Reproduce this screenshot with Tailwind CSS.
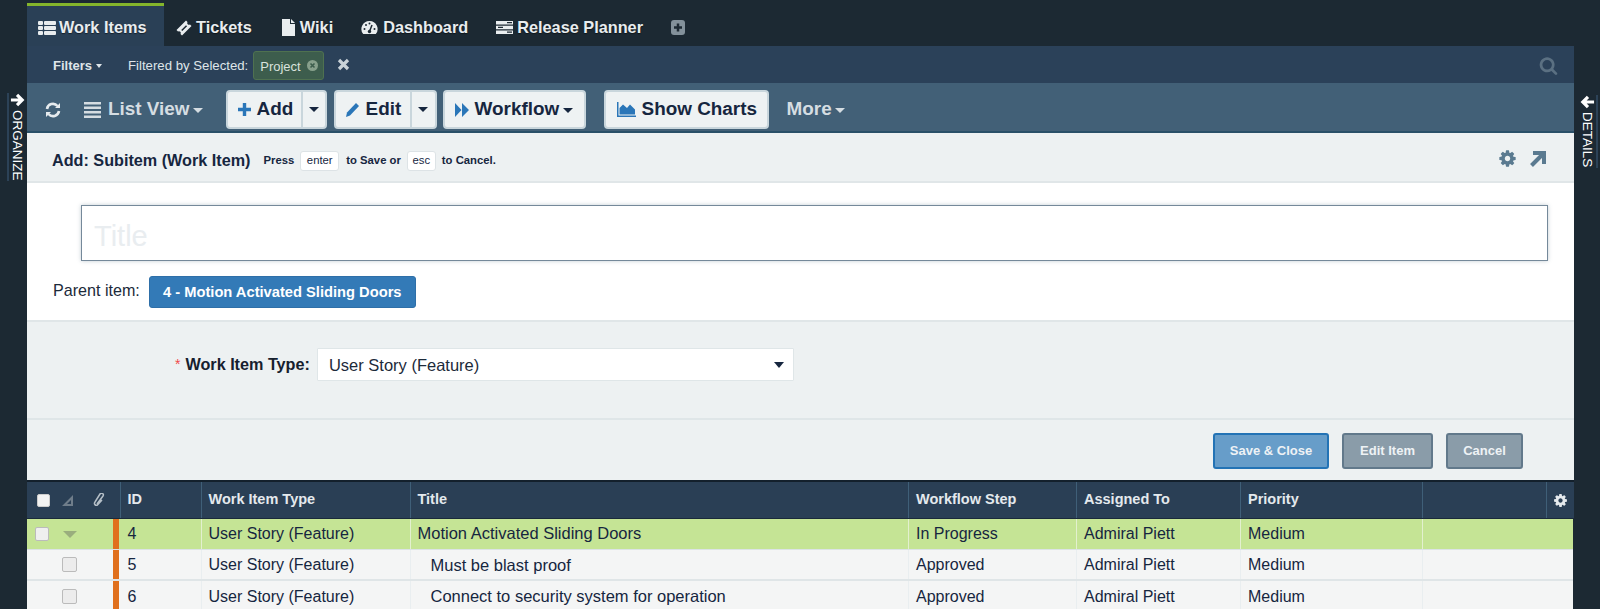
<!DOCTYPE html>
<html>
<head>
<meta charset="utf-8">
<script src="https://cdn.jsdelivr.net/npm/@tailwindcss/browser@4"></script>
</head>
<body class="m-0 overflow-hidden bg-[#1c2933] font-['Liberation_Sans',Arial,sans-serif] text-[#16263f]">
<div class="flex h-[609px] w-[1600px] overflow-hidden">
  <!-- left rail -->
  <div class="w-[27px] shrink-0 pt-[93px] pl-[7px]">
    <div class="flex w-[18px] flex-col items-center border-l-2 border-[#2c4257] pb-0 text-white">
      <svg class="mb-[3px] h-[14px] w-[15px]" viewBox="0 0 16 14"><path d="M1 7h11M7.500 1.500L13 7l-5.500 5.500" fill="none" stroke="#fff" stroke-width="3.400"/></svg>
      <span class="text-[13.500px] leading-[15px] [writing-mode:vertical-rl]">ORGANIZE</span>
    </div>
  </div>

  <!-- main -->
  <div class="flex w-[1547px] shrink-0 flex-col overflow-hidden">
    <!-- tabs -->
    <div class="flex h-[46px] shrink-0 items-end pt-[3px] text-[16.300px] font-bold text-[#e9edef] [text-shadow:0_1px_1px_rgba(0,0,0,0.5)]">
      <div class="flex h-[43px] w-[137px] items-center gap-[3px] border-t-[3px] border-[#84b52c] bg-[#2a4056] pl-[11px] pt-[3px]">
        <svg class="h-[14px] w-[18px]" viewBox="0 0 18 14" fill="#e9edef"><rect width="5" height="4" rx="1"/><rect x="6" width="12" height="4" rx="1"/><rect y="5" width="5" height="4" rx="1"/><rect x="6" y="5" width="12" height="4" rx="1"/><rect y="10" width="5" height="4" rx="1"/><rect x="6" y="10" width="12" height="4" rx="1"/></svg>
        <span>Work Items</span>
      </div>
      <div class="flex h-[43px] items-center gap-[4px] pl-[12px] pt-[6px]">
        <svg class="h-[16px] w-[16px]" viewBox="0 0 16 16" fill="#e9edef"><path d="M10 .5l1.500 1.500a1.800 1.800 0 0 0 2.500 2.500l1.500 1.500-9.500 9.500L4.500 14a1.800 1.800 0 0 0-2.500-2.500L.5 10zM10 5.200L5.200 10l1.100 1.100L11.100 6.300z" fill-rule="evenodd"/></svg>
        <span>Tickets</span>
      </div>
      <div class="flex h-[43px] items-center gap-[5px] pl-[30px] pt-[6px]">
        <svg class="h-[17px] w-[13px]" viewBox="0 0 13 17" fill="#e9edef"><path d="M0 0h8v5h5v12H0zM9 0l4 4H9z"/></svg>
        <span>Wiki</span>
      </div>
      <div class="flex h-[43px] items-center gap-[5px] pl-[28px] pt-[6px]">
        <svg class="h-[15px] w-[17px]" viewBox="0 0 17 15"><path d="M8.500 1A8 8 0 0 0 2.200 14h12.600A8 8 0 0 0 8.500 1z" fill="#e9edef"/><path d="M8.500 11.500L11 5" stroke="#1c2933" stroke-width="1.500"/><circle cx="8.500" cy="11.500" r="1.700" fill="#1c2933"/><circle cx="3.500" cy="9" r="1" fill="#1c2933"/><circle cx="5" cy="5" r="1" fill="#1c2933"/><circle cx="8.500" cy="3.500" r="1" fill="#1c2933"/><circle cx="13.500" cy="9" r="1" fill="#1c2933"/></svg>
        <span>Dashboard</span>
      </div>
      <div class="flex h-[43px] items-center gap-[4px] pl-[28px] pt-[6px]">
        <svg class="h-[13px] w-[17px]" viewBox="0 0 17 13" fill="#e9edef"><path d="M0 0h17v3.500H0zM0 4.700h17v3.500H0zM0 9.500h17V13H0z"/><path d="M11 1h5v1.300h-5zM2 5.800h5v1.300H2zM11 10.500h5v1.300h-5z" fill="#1c2933"/></svg>
        <span>Release Planner</span>
      </div>
      <div class="flex h-[43px] items-center pl-[28px] pt-[5px]">
        <svg class="h-[15px] w-[14px]" viewBox="0 0 14 15"><rect width="14" height="15" rx="3" fill="#83919b"/><path d="M7 3.500v8M3 7.500h8" stroke="#1c2933" stroke-width="2.500"/></svg>
      </div>
    </div>

    <!-- filter bar -->
    <div class="flex h-[37px] shrink-0 items-center bg-[#2b4159] pl-[26px] pr-[16px] pt-[1px] text-[13.200px] text-[#dfe5e9]">
      <span class="pt-[2px] text-[13px] font-bold">Filters</span>
      <span class="ml-[4px] mt-[2px] border-x-[3.500px] border-t-[4px] border-x-transparent border-t-[#dfe5e9]"></span>
      <span class="ml-[26px] pt-[2px]">Filtered by Selected:</span>
      <span class="ml-[5px] flex h-[29px] w-[71px] items-center rounded-[3px] border border-[#4f7150] bg-[#3d5d4d] pl-[6px] pt-[3px] text-[13px] text-[#d9e2dc]">Project
        <svg class="ml-[6px] mb-[2px] h-[11px] w-[11px]" viewBox="0 0 11 11"><circle cx="5.500" cy="5.500" r="5.500" fill="#87a08c"/><path d="M3.500 3.500l4 4m0-4l-4 4" stroke="#3d5d4d" stroke-width="1.600"/></svg>
      </span>
      <svg class="ml-[13px] mb-[2px] h-[13px] w-[13px]" viewBox="0 0 13 13"><path d="M2 2l9 9m0-9l-9 9" stroke="#c9d2d8" stroke-width="3.200"/></svg>
      <svg class="ml-auto h-[19px] w-[19px]" viewBox="0 0 1792 1792" fill="#5b7082"><path d="M1216 832q0-185-131.500-316.500t-316.500-131.500-316.500 131.500-131.500 316.500 131.500 316.500 316.500 131.500 316.500-131.500 131.500-316.500zm512 832q0 52-38 90t-90 38q-54 0-90-38l-343-342q-179 124-399 124-143 0-273.500-55.500t-225-150-150-225-55.500-273.500 55.500-273.500 150-225 225-150 273.500-55.500 273.500 55.500 225 150 150 225 55.500 273.500q0 220-124 399l343 343q37 37 37 90z"/></svg>
    </div>

    <!-- toolbar -->
    <div class="flex h-[50px] shrink-0 items-center border-b-2 border-[#2a5068] bg-[#426077] pl-[18px] pt-[5px] text-[18.900px] font-bold">
      <svg class="h-[16px] w-[16px]" viewBox="0 0 16 16" fill="none" stroke="#e6ebee" stroke-width="2.600"><path d="M2 7a6 6 0 0 1 10.500-3M14 9a6 6 0 0 1-10.500 3"/><path d="M15 1v5h-5zM1 15v-5h5z" fill="#e6ebee" stroke="none"/></svg>
      <svg class="ml-[23px] h-[16px] w-[17px]" viewBox="0 0 17 16" fill="#d5dde2"><path d="M0 0h17v2.500H0zM0 4.500h17V7H0zM0 9h17v2.500H0zM0 13.500h17V16H0z"/></svg>
      <span class="ml-[7px] text-[#d5dde2]">List View</span>
      <span class="ml-[3px] mt-[2px] border-x-[5px] border-t-[5px] border-x-transparent border-t-[#d5dde2]"></span>

      <div class="ml-[23px] flex h-[39px] w-[101px] shrink-0 rounded-[4px] border-2 border-[#c9d6dc] bg-[#eef2f3]">
        <div class="flex w-[75px] items-center gap-[6px] border-r-2 border-[#c9d6dc] pl-[10px]">
          <svg class="h-[13px] w-[13px]" viewBox="0 0 13 13"><path d="M6.500 0v13M0 6.500h13" stroke="#2a76b8" stroke-width="3.400"/></svg>
          <span>Add</span>
        </div>
        <div class="flex flex-1 items-center justify-center"><span class="border-x-[5px] border-t-[5px] border-x-transparent border-t-[#16263f]"></span></div>
      </div>

      <div class="ml-[7px] flex h-[39px] w-[103px] shrink-0 rounded-[4px] border-2 border-[#c9d6dc] bg-[#eef2f3]">
        <div class="flex w-[76px] items-center gap-[6px] border-r-2 border-[#c9d6dc] pl-[10px]">
          <svg class="h-[15px] w-[14px]" viewBox="0 0 14 15" fill="#2a76b8"><path d="M10 1l3 3-9 9.500-4 1.500 1-4.500z"/></svg>
          <span>Edit</span>
        </div>
        <div class="flex flex-1 items-center justify-center"><span class="border-x-[5px] border-t-[5px] border-x-transparent border-t-[#16263f]"></span></div>
      </div>

      <div class="ml-[6px] flex h-[39px] w-[143px] shrink-0 items-center rounded-[4px] border-2 border-[#c9d6dc] bg-[#eef2f3] pl-[10px]">
        <svg class="h-[14px] w-[14px]" viewBox="0 0 14 14" fill="#2a76b8"><path d="M0 0l6.500 7L0 14zM7 0l7 7-7 7z"/></svg>
        <span class="ml-[6px]">Workflow</span>
        <span class="ml-[4px] mt-[2px] border-x-[5px] border-t-[5px] border-x-transparent border-t-[#16263f]"></span>
      </div>

      <div class="ml-[18px] flex h-[39px] w-[165px] shrink-0 items-center rounded-[4px] border-2 border-[#c9d6dc] bg-[#eef2f3] pl-[11px]">
        <svg class="h-[15px] w-[19px]" viewBox="0 0 19 15" fill="#2a76b8"><path d="M0 0h1.500v13.500H19V15H0z"/><path d="M2.500 12.500V6L6 2.500 10 6l3-3.500 5 5v5z"/></svg>
        <span class="ml-[6px]">Show Charts</span>
      </div>

      <span class="ml-[18px] text-[#d5dde2]">More</span>
      <span class="ml-[3px] mt-[2px] border-x-[5px] border-t-[5px] border-x-transparent border-t-[#d5dde2]"></span>
    </div>

    <!-- add header -->
    <div class="flex h-[50px] shrink-0 items-center border-b-2 border-[#e0e6e8] bg-[#edf1f2] pl-[25px] pr-[28px] pt-[7px]">
      <span class="text-[16.200px] font-bold">Add: Subitem (Work Item)</span>
      <span class="ml-[13px] text-[11.300px] font-bold">Press</span>
      <span class="ml-[6px] flex h-[20px] w-[39px] items-center justify-center rounded-[3px] border border-[#dde3e6] bg-white text-[11.300px]">enter</span>
      <span class="ml-[7px] text-[11.300px] font-bold">to Save or</span>
      <span class="ml-[6px] flex h-[20px] w-[29px] items-center justify-center rounded-[3px] border border-[#dde3e6] bg-white text-[11.300px]">esc</span>
      <span class="ml-[6px] text-[11.300px] font-bold">to Cancel.</span>
      <svg class="ml-auto mb-[4px] h-[19px] w-[19px]" viewBox="0 0 1792 1792" fill="#5a7a90"><path d="M1152 896q0-106-75-181t-181-75-181 75-75 181 75 181 181 75 181-75 75-181zm512-109v222q0 12-8 23t-20 13l-185 28q-19 54-39 91 35 50 107 138 10 12 10 25t-9 23q-27 37-99 108t-94 71q-12 0-26-9l-138-108q-44 23-91 38-16 136-29 186-7 28-36 28h-222q-14 0-24.500-8.500t-11.500-21.500l-28-184q-49-16-90-37l-141 107q-10 9-25 9-14 0-25-11-126-114-165-168-7-10-7-23 0-12 8-23 15-21 51-66.500t54-70.500q-27-50-41-99l-183-27q-13-2-21-12.500t-8-23.500v-222q0-12 8-23t19-13l186-28q14-46 39-92-40-57-107-138-10-12-10-24 0-10 9-23 26-36 98.500-107.500t94.500-71.500q13 0 26 10l138 107q44-23 91-38 16-136 29-186 7-28 36-28h222q14 0 24.500 8.500t11.500 21.500l28 184q49 16 90 37l142-107q9-9 24-9 13 0 25 10 129 119 165 170 7 8 7 22 0 12-8 23-15 21-51 66.500t-54 70.500q26 50 41 98l183 28q13 2 21 12.500t8 23.500z"/></svg>
      <svg class="ml-[13px] mb-[4px] h-[16px] w-[16px]" viewBox="0 0 16 16"><path d="M1.500 14.500L13 3" stroke="#5a7a90" stroke-width="4"/><path d="M3 0h13v13h-4V4H3z" fill="#5a7a90"/></svg>
    </div>

    <!-- title block -->
    <div class="flex h-[139px] shrink-0 flex-col border-b-2 border-[#e0e6e8] bg-white pl-[26px]">
      <div class="ml-[28px] mt-[22px] flex h-[56px] w-[1467px] shrink-0 items-center border border-[#75899a] pl-[12px] pt-[7px] text-[29px] text-[#e9edf0] shadow-[0_0_4px_rgba(80,110,130,0.35)]">Title</div>
      <div class="mt-[15px] flex items-center text-[16.100px] text-[#1c2a3a]">
        <span class="pb-[3px]">Parent item:</span>
        <span class="ml-[9px] flex h-[32px] w-[267px] items-center justify-center rounded-[3px] border border-[#2e6fa8] bg-[#337ab7] text-[14.700px] font-bold text-white">4 - Motion Activated Sliding Doors</span>
      </div>
    </div>

    <!-- type row -->
    <div class="flex h-[98px] shrink-0 items-start border-b-2 border-[#dfe6e8] bg-[#edf1f2] pl-[148px] pt-[26px]">
      <div class="flex h-[33px] items-center">
        <span class="mr-[5px] text-[14px] text-[#f04a4a]">*</span>
        <span class="text-[16.200px] font-bold text-[#16202e]">Work Item Type:</span>
        <div class="ml-[7px] flex h-[33px] w-[477px] items-center rounded-[1px] border border-[#dfe6e8] bg-white pl-[11px] pr-[9px] pt-[1px] text-[16.500px] text-[#1c2a3a]">
          <span>User Story (Feature)</span>
          <span class="ml-auto border-x-[5.500px] border-t-[6px] border-x-transparent border-t-[#16263f]"></span>
        </div>
      </div>
    </div>

    <!-- footer -->
    <div class="flex h-[62px] shrink-0 items-start justify-end gap-[13px] border-b-2 border-[#13202c] bg-[#edf1f2] pr-[51px] pt-[13px] text-[13px] font-bold text-[#eef2f5]">
      <span class="flex h-[36px] w-[116px] items-center justify-center rounded-[3px] border-2 border-[#2373b5] bg-[#679dc9]">Save &amp; Close</span>
      <span class="flex h-[36px] w-[91px] items-center justify-center rounded-[3px] border-2 border-[#62798b] bg-[#8a9ca9]">Edit Item</span>
      <span class="flex h-[36px] w-[77px] items-center justify-center rounded-[3px] border-2 border-[#62798b] bg-[#8a9ca9]">Cancel</span>
    </div>

    <!-- table -->
    <div class="grid shrink-0 grid-cols-[93.500px_81px_209px_498.500px_168px_164px_182px_124px_27px] text-[16px] leading-[24px]">
      <!-- header -->
      <div class="col-span-9 grid h-[37px] grid-cols-subgrid items-center border-b border-[#1a2a3a] bg-[#2a3f55] text-[14.500px] font-bold text-[#e4e9ed]">
        <div class="flex h-full items-center border-r border-[#3f5f78] pl-[10px]">
          <span class="h-[13px] w-[13px] rounded-[2px] border border-[#ccc] bg-[#f2f2f2]"></span>
          <svg class="ml-[12px] h-[11px] w-[11px]" viewBox="0 0 11 11"><path d="M11 0v11H0zM9 5L5 9h4z" fill="#6f7d8a" fill-rule="evenodd"/></svg>
          <svg class="ml-[20px] h-[14px] w-[12px]" viewBox="0 0 12 14" fill="none" stroke="#b5bfc7" stroke-width="1.500"><path d="M4 11l6-8a1.600 1.600 0 0 0-3-2L2 9c-1.500 2 .5 4 2.500 3L9 7"/></svg>
        </div>
        <div class="flex h-full items-center border-r border-[#3f5f78] pb-[2px] pl-[7px]">ID</div>
        <div class="flex h-full items-center border-r border-[#3f5f78] pb-[2px] pl-[7px]">Work Item Type</div>
        <div class="flex h-full items-center border-r border-[#3f5f78] pb-[2px] pl-[7px]">Title</div>
        <div class="flex h-full items-center border-r border-[#3f5f78] pb-[2px] pl-[7px]">Workflow Step</div>
        <div class="flex h-full items-center border-r border-[#3f5f78] pb-[2px] pl-[7px]">Assigned To</div>
        <div class="flex h-full items-center border-r border-[#3f5f78] pb-[2px] pl-[7px]">Priority</div>
        <div class="h-full border-r border-[#3f5f78]"></div>
        <div class="flex h-full items-center justify-center">
          <svg class="h-[15px] w-[15px]" viewBox="0 0 1792 1792" fill="#e4e9ed"><path d="M1152 896q0-106-75-181t-181-75-181 75-75 181 75 181 181 75 181-75 75-181zm512-109v222q0 12-8 23t-20 13l-185 28q-19 54-39 91 35 50 107 138 10 12 10 25t-9 23q-27 37-99 108t-94 71q-12 0-26-9l-138-108q-44 23-91 38-16 136-29 186-7 28-36 28h-222q-14 0-24.500-8.500t-11.500-21.500l-28-184q-49-16-90-37l-141 107q-10 9-25 9-14 0-25-11-126-114-165-168-7-10-7-23 0-12 8-23 15-21 51-66.500t54-70.500q-27-50-41-99l-183-27q-13-2-21-12.500t-8-23.500v-222q0-12 8-23t19-13l186-28q14-46 39-92-40-57-107-138-10-12-10-24 0-10 9-23 26-36 98.500-107.500t94.500-71.500q13 0 26 10l138 107q44-23 91-38 16-136 29-186 7-28 36-28h222q14 0 24.500 8.500t11.500 21.500l28 184q49 16 90 37l142-107q9-9 24-9 13 0 25 10 129 119 165 170 7 8 7 22 0 12-8 23-15 21-51 66.500t-54 70.500q26 50 41 98l183 28q13 2 21 12.500t8 23.500z"/></svg>
        </div>
      </div>
      <!-- row 4 -->
      <div class="col-span-9 mr-[1px] grid h-[31px] grid-cols-subgrid items-center border-b border-[#dce3e5] bg-[#c5e495] text-[#16263f]">
        <div class="flex h-full items-center pl-[8px]">
          <span class="h-[14px] w-[14px] rounded-[2px] border border-[#bbb] bg-[#efefef]"></span>
          <span class="ml-[14px] border-x-[7px] border-t-[7px] border-x-transparent border-t-[#9aae7d]"></span>
          <span class="ml-auto mr-[1.500px] h-full w-[6px] bg-[#e0701d]"></span>
        </div>
        <div class="flex h-full items-center border-r border-[#e3f0cf] pl-[7px]">4</div>
        <div class="flex h-full items-center border-r border-[#e3f0cf] pl-[7px]">User Story (Feature)</div>
        <div class="flex h-full items-center border-r border-[#e3f0cf] pb-[2px] pl-[7px] text-[16.500px]">Motion Activated Sliding Doors</div>
        <div class="flex h-full items-center border-r border-[#e3f0cf] pl-[7px]">In Progress</div>
        <div class="flex h-full items-center border-r border-[#e3f0cf] pl-[7px]">Admiral Piett</div>
        <div class="flex h-full items-center border-r border-[#e3f0cf] pl-[7px]">Medium</div>
        <div class="col-span-2"></div>
      </div>
      <!-- row 5 -->
      <div class="col-span-9 mr-[1px] grid h-[31px] grid-cols-subgrid items-center border-b-2 border-[#dfe5e7] bg-[#f4f5f5] text-[#16263f]">
        <div class="flex h-full items-center pl-[35px]">
          <span class="h-[15px] w-[15px] rounded-[2px] border border-[#bbb] bg-[#ececec]"></span>
          <span class="ml-auto mr-[1.500px] h-full w-[6px] bg-[#e0701d]"></span>
        </div>
        <div class="flex h-full items-center border-r border-[#e9eef0] pl-[7px]">5</div>
        <div class="flex h-full items-center border-r border-[#e9eef0] pl-[7px]">User Story (Feature)</div>
        <div class="flex h-full items-center border-r border-[#e9eef0] pl-[20px] text-[16.500px]">Must be blast proof</div>
        <div class="flex h-full items-center border-r border-[#e9eef0] pl-[7px]">Approved</div>
        <div class="flex h-full items-center border-r border-[#e9eef0] pl-[7px]">Admiral Piett</div>
        <div class="flex h-full items-center border-r border-[#e9eef0] pl-[7px]">Medium</div>
        <div class="col-span-2"></div>
      </div>
      <!-- row 6 -->
      <div class="col-span-9 mr-[1px] grid h-[31px] grid-cols-subgrid items-center bg-[#f4f5f5] text-[#16263f]">
        <div class="flex h-full items-center pl-[35px]">
          <span class="h-[15px] w-[15px] rounded-[2px] border border-[#bbb] bg-[#ececec]"></span>
          <span class="ml-auto mr-[1.500px] h-full w-[6px] bg-[#e0701d]"></span>
        </div>
        <div class="flex h-full items-center border-r border-[#e9eef0] pl-[7px]">6</div>
        <div class="flex h-full items-center border-r border-[#e9eef0] pl-[7px]">User Story (Feature)</div>
        <div class="flex h-full items-center border-r border-[#e9eef0] pb-[2px] pl-[20px] text-[16.500px]">Connect to security system for operation</div>
        <div class="flex h-full items-center border-r border-[#e9eef0] pl-[7px]">Approved</div>
        <div class="flex h-full items-center border-r border-[#e9eef0] pl-[7px]">Admiral Piett</div>
        <div class="flex h-full items-center border-r border-[#e9eef0] pl-[7px]">Medium</div>
        <div class="col-span-2"></div>
      </div>
    </div>
  </div>

  <!-- right rail -->
  <div class="w-[26px] shrink-0 pt-[95px]">
    <div class="ml-[5px] flex w-[19px] flex-col items-center border-r-2 border-[#2c4257] pb-[1px] text-white">
      <svg class="mb-[3px] h-[14px] w-[15px]" viewBox="0 0 16 14"><path d="M15 7H4M8.500 1.500L3 7l5.500 5.500" fill="none" stroke="#fff" stroke-width="3.400"/></svg>
      <span class="text-[13.500px] leading-[15px] [writing-mode:vertical-rl]">DETAILS</span>
    </div>
  </div>
</div>
</body>
</html>
